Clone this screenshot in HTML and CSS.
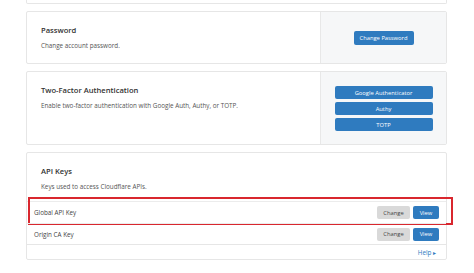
FILE: index.html
```html
<!DOCTYPE html>
<html lang="en">
<head>
    <meta charset="UTF-8">
    <meta name="viewport" content="width=device-width, initial-scale=1.0">
    <title>Account settings</title>
    <link rel="stylesheet" href="styles.css">
</head>
<body>
    <div class="wrapper">
        <div class="card card_cut"></div>

        <div class="card">
            <div class="card_main">
                <h3 class="card_title">Password</h3>
                <p class="card_desc">Change account password.</p>
            </div>
            <div class="card_side">
                <a href="#" class="btn btn_blue btn_pw">Change Password</a>
            </div>
        </div>

        <div class="card">
            <div class="card_main">
                <h3 class="card_title">Two-Factor Authentication</h3>
                <p class="card_desc">Enable two-factor authentication with Google Auth, Authy, or TOTP.</p>
            </div>
            <div class="card_side card_side_stack">
                <a href="#" class="btn btn_blue btn_wide">Google Authenticator</a>
                <a href="#" class="btn btn_blue btn_wide">Authy</a>
                <a href="#" class="btn btn_blue btn_wide">TOTP</a>
            </div>
        </div>

        <div class="card card_col">
            <div class="card_main card_main_api">
                <h3 class="card_title">API Keys</h3>
                <p class="card_desc">Keys used to access Cloudflare APIs.</p>
            </div>
            <div class="key_row key_row_first">
                <span>Global API Key</span>
                <div class="key_btns">
                    <a href="#" class="btn btn_grey">Change</a>
                    <a href="#" class="btn btn_blue">View</a>
                </div>
                <div class="highlight"></div>
            </div>
            <div class="key_row">
                <span>Origin CA Key</span>
                <div class="key_btns">
                    <a href="#" class="btn btn_grey">Change</a>
                    <a href="#" class="btn btn_blue">View</a>
                </div>
            </div>
            <div class="card_foot">
                <a href="#" class="help">Help &#9656;</a>
            </div>
        </div>
    </div>
</body>
</html>
```

FILE: styles.css
```css
*{box-sizing:border-box;}
body{margin:0; background:#fff; font-family:"Open Sans", "Liberation Sans", sans-serif; color:#333;}
.wrapper{width:447px; padding-left:26px; display:flex; flex-direction:column; gap:7px;}

.card{display:flex; border:1px solid #e6e6e6; border-radius:2px; background:#fff; position:relative;}
.card_cut{height:4px; border-top:none; border-radius:0 0 2px 2px;}
.card_col{flex-direction:column;}

.card_main{flex:1; padding:13px 14px;}
.card_main_api{padding-bottom:10px;}
.card_title{margin:0; font-size:7.6px; line-height:11px; font-weight:600; color:#333;}
.card_desc{margin:5px 0 0; font-size:6.3px; line-height:9px; color:#555;}

.card_side{width:126px; background:#f6f7f8; border-left:1px solid #e8e8e8; display:flex; align-items:center; justify-content:center;}
.card_side_stack{flex-direction:column; gap:3px; padding:14px 0 13px;}

.btn{display:inline-flex; align-items:center; justify-content:center; height:13px; border-radius:2px; font-size:5.8px; text-decoration:none;}
.btn_blue{background:#2f7bbf; color:#fff;}
.btn_grey{background:#d9d9d9; color:#444;}
.btn_pw{width:60px; height:14px;}
.btn_wide{width:98px;}

.key_row{position:relative; display:flex; align-items:center; justify-content:space-between; border-top:1px solid #ececec; padding:0 7px; height:22px; font-size:6.3px; color:#444;}
.key_row + .key_row{height:21px;}
.key_btns{display:flex; gap:3px;}
.key_btns .btn_grey{width:33px;}
.key_btns .btn_blue{width:26px;}

/* 스크린샷 위의 빨간 강조 표시 */
.highlight{position:absolute; top:-5px; left:1px; right:-7px; bottom:-2px; border:2px solid #d9272e; pointer-events:none;}

.card_foot{border-top:1px solid #e6e6e6; height:15px; display:flex; align-items:center; justify-content:flex-end; padding-right:10px;}
.help{font-size:6.3px; color:#2f7bbf; text-decoration:none;}
```
